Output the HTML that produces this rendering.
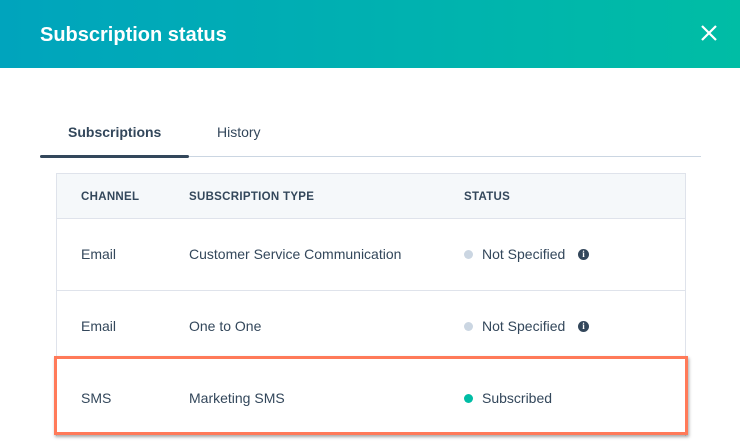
<!DOCTYPE html><html><head><style>
body{margin:0;width:740px;height:446px;overflow:hidden;background:#fff;font-family:"Liberation Sans",sans-serif;color:#33475b;position:relative}
.hd{position:absolute;left:0;top:0;width:740px;height:68px;background:linear-gradient(90deg,#00a4bd,#00bda5)}
.hd h1{position:absolute;left:40px;top:24px;margin:0;font-size:20px;font-weight:bold;color:#fff}
.t{position:absolute;font-size:14px;white-space:nowrap}
.th{position:absolute;font-size:11.5px;font-weight:bold;letter-spacing:.3px}
.dot{position:absolute;width:9px;height:9px;border-radius:50%}
.info{position:absolute;width:11px;height:11px;border-radius:50%;background:#33475b;color:#fff;font-size:9px;font-weight:bold;text-align:center;line-height:11px;font-family:"Liberation Serif",serif}
</style></head><body>
<div class="hd"><h1>Subscription status</h1>
<svg style="position:absolute;left:700px;top:24px" width="18" height="18" viewBox="0 0 18 18"><path d="M2 2L16 16M16 2L2 16" stroke="#fff" stroke-width="2.2"/></svg></div>
<div class="t" style="left:68px;top:124px;font-weight:bold">Subscriptions</div>
<div class="t" style="left:217px;top:124px">History</div>
<div style="position:absolute;left:40px;top:156px;width:661px;height:1px;background:#cbd6e2"></div>
<div style="position:absolute;left:40px;top:155px;width:149px;height:3px;border-radius:2px;background:#33475b"></div>
<div style="position:absolute;left:56px;top:173px;width:628px;height:262px;border:1px solid #dfe3eb;border-bottom:none"></div>
<div style="position:absolute;left:57px;top:174px;width:628px;height:44px;background:#f5f8fa;border-bottom:1px solid #dfe3eb"></div>
<div style="position:absolute;left:57px;top:290px;width:628px;height:1px;background:#dfe3eb"></div>
<div class="th" style="left:81px;top:191px">CHANNEL</div>
<div class="th" style="left:189px;top:191px">SUBSCRIPTION TYPE</div>
<div class="th" style="left:464px;top:191px">STATUS</div>
<div class="t" style="left:81px;top:246px">Email</div>
<div class="t" style="left:189px;top:246px">Customer Service Communication</div>
<div class="dot" style="left:464px;top:250px;background:#cbd6e2"></div>
<div class="t" style="left:482px;top:246px">Not Specified</div><div class="info" style="left:578px;top:249px">i</div>
<div class="t" style="left:81px;top:318px">Email</div>
<div class="t" style="left:189px;top:318px">One to One</div>
<div class="dot" style="left:464px;top:322px;background:#cbd6e2"></div>
<div class="t" style="left:482px;top:318px">Not Specified</div><div class="info" style="left:578px;top:321px">i</div>
<div style="position:absolute;left:54px;top:356px;width:628px;height:73px;border:3px solid #ff7a59;box-shadow:1px 2px 3px rgba(0,0,0,.35)"></div>
<div class="t" style="left:81px;top:390px">SMS</div>
<div class="t" style="left:189px;top:390px">Marketing SMS</div>
<div class="dot" style="left:464px;top:394px;background:#00bda5"></div>
<div class="t" style="left:482px;top:390px">Subscribed</div>
</body></html>
